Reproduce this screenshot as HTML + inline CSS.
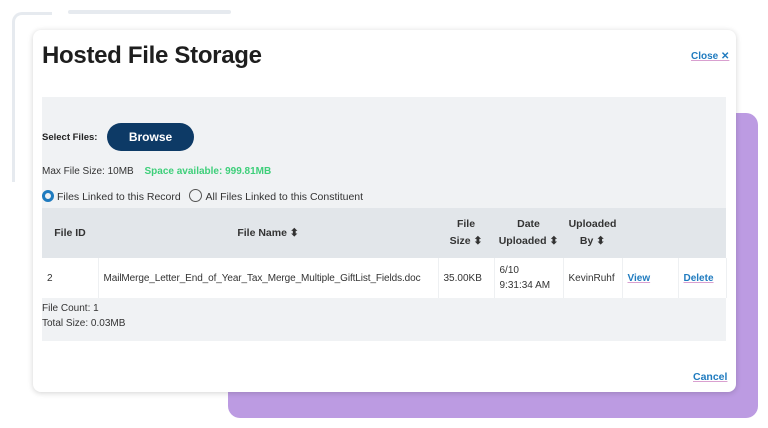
<!DOCTYPE html>
<html><head><style>
*{margin:0;padding:0;box-sizing:border-box}
body{width:768px;height:428px;background:#fff;position:relative;overflow:hidden;font-family:"Liberation Sans",sans-serif;color:#333}
.abs{position:absolute}
.card{left:33px;top:30px;width:703px;height:362px;background:#fff;border-radius:8px;box-shadow:0 1px 6px rgba(0,0,0,.18)}
.purple{left:228px;top:113px;width:530px;height:305px;background:#bc9be2;border-radius:12px}
.panel{left:42px;top:97px;width:684px;height:244px;background:#f0f2f4}
h1{position:absolute;left:42px;top:42px;font-size:24px;font-weight:bold;color:#1e1e1e;letter-spacing:-0.3px}
a{color:#1f7bbf;font-weight:bold;text-decoration:underline;text-decoration-color:#d9a0d0}
table{position:absolute;left:42px;top:208px;width:684px;border-collapse:collapse;font-size:10px;table-layout:fixed}
th{background:#e2e6ea;height:50px;font-weight:bold;color:#333;line-height:17px;font-size:10.5px}
td{background:#fff;height:40px;border-right:1px solid #eef0f2;padding:0 5px;white-space:nowrap;overflow:hidden}
.rad{display:inline-block;width:12px;height:12px;border-radius:50%;vertical-align:-2px;margin-right:3px}
</style></head><body>
<div class="abs" style="left:12px;top:12px;width:40px;height:170px;border-left:3px solid #e6eaef;border-top:3px solid #e6eaef;border-top-left-radius:10px"></div>
<div class="abs" style="left:68px;top:10px;width:163px;height:4px;background:#e6eaef;border-radius:2px"></div>
<div class="abs purple"></div>
<div class="abs card"></div>
<h1>Hosted File Storage</h1>
<a class="abs" style="left:691px;top:51px;font-size:10px">Close ✕</a>
<div class="abs panel"></div>
<div class="abs" style="left:42px;top:132px;font-size:9.5px;font-weight:bold;color:#222">Select Files:</div>
<div class="abs" style="left:107px;top:123px;width:87px;height:28px;border-radius:14px;background:#0d3a66;color:#fff;font-weight:bold;font-size:12px;text-align:center;line-height:28px">Browse</div>
<div class="abs" style="left:42px;top:166px;font-size:10px">Max File Size: 10MB <span style="color:#3ecf7a;font-weight:bold;margin-left:8px">Space available: 999.81MB</span></div>
<div class="abs" style="left:42px;top:189px;font-size:10.5px"><span class="rad" style="border:3.5px solid #1f7bbf"></span>Files Linked to this Record &nbsp;&nbsp;<span class="rad" style="border:1px solid #555;width:13px;height:13px"></span>All Files Linked to this Constituent</div>
<table>
<colgroup><col style="width:56px"><col style="width:340px"><col style="width:56px"><col style="width:69px"><col style="width:59px"><col style="width:56px"><col style="width:48px"></colgroup>
<tr><th>File ID</th><th>File Name ⬍</th><th>File<br>Size ⬍</th><th>Date<br>Uploaded ⬍</th><th>Uploaded<br>By ⬍</th><th></th><th></th></tr>
<tr><td>2</td><td style="font-size:10px;letter-spacing:-0.1px">MailMerge_Letter_End_of_Year_Tax_Merge_Multiple_GiftList_Fields.doc</td><td>35.00KB</td><td style="line-height:15px">6/10<br>9:31:34 AM</td><td>KevinRuhf</td><td><a>View</a></td><td><a>Delete</a></td></tr>
</table>
<div class="abs" style="left:42px;top:301px;font-size:10px;line-height:15px">File Count: 1<br>Total Size: 0.03MB</div>
<a class="abs" style="left:693px;top:371px;font-size:10.5px">Cancel</a>
</body></html>
